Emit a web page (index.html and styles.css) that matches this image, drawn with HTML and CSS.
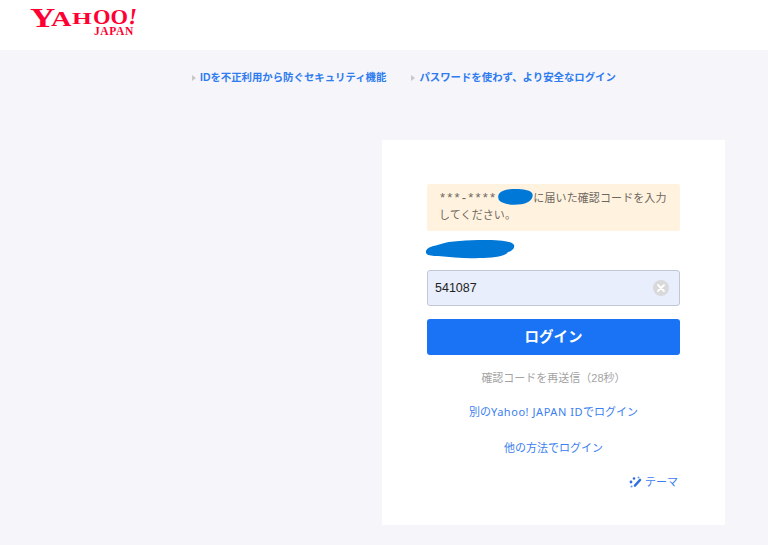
FILE: index.html
```html
<!DOCTYPE html>
<html lang="ja">
<head>
<meta charset="utf-8">
<title>Yahoo! JAPAN ログイン</title>
<link rel="stylesheet" href="styles.css">
</head>
<body>
<header class="header">
  <div class="logo">
    <div class="logo-main"><span class="logo-y">Y</span><span class="logo-a">A</span><span class="logo-h">H</span><span class="logo-o">OO</span><span class="logo-ex">!</span></div>
    <div class="logo-sub">JAPAN</div>
  </div>
</header>
<main class="main">
  <nav class="nav">
    <a class="nav-link" href="#"><span class="tri"></span>IDを不正利用から防ぐセキュリティ機能</a>
    <a class="nav-link" href="#"><span class="tri"></span>パスワードを使わず、より安全なログイン</a>
  </nav>
  <div class="card-row">
    <section class="card">
      <div class="notice">
        <p class="notice-text"><span class="stars">***-****</span><span class="mask"><svg class="mask-svg" viewBox="0 0 38 18" width="40" height="20"><path d="M3 9C3 4 9 2 16 1.500C24 1 33 2 35 5C37 8 35 12 31 14C25 17 14 17 9 15C5 14 3 12 3 9Z" fill="#0078d7"/></svg></span>に届いた確認コードを入力してください。</p>
      </div>
      <div class="user-row">
        <svg class="user-mask" viewBox="0 0 92 22" width="92" height="22"><path d="M2 13C3 9 10 8 17 6C25 3 44 2 60 2C75 2 88 3 90 7C91 10 88 13 84 14C82 18 70 20 55 20C42 21 28 19 14 18C6 18 1 17 2 13Z" fill="#0078d7"/></svg>
      </div>
      <div class="field">
        <span class="field-value">541087</span>
        <span class="clear"><svg viewBox="0 0 16 16" width="16" height="16"><circle cx="8" cy="8" r="8" fill="#d9d9dc"/><path d="M5 5L11 11M11 5L5 11" stroke="#fff" stroke-width="1.800" stroke-linecap="round"/></svg></span>
      </div>
      <button class="btn" type="button">ログイン</button>
      <div class="resend">確認コードを再送信（28秒）</div>
      <a class="link link-first" href="#">別の<span class="latin">Yahoo! JAPAN ID</span>でログイン</a>
      <a class="link link-second" href="#">他の方法でログイン</a>
      <div class="theme-row">
        <a class="theme" href="#"><svg viewBox="0 0 14 12" width="14" height="12"><path d="M6 9.500L11 4" stroke="#2f6fe0" stroke-width="2.600" stroke-linecap="round"/><circle cx="2" cy="6" r="1.400" fill="#2f6fe0"/><circle cx="5" cy="2.500" r="1.300" fill="#2f6fe0"/><circle cx="2.500" cy="10.500" r="1.100" fill="#6b9bef"/><circle cx="9.500" cy="1.500" r="1" fill="#6b9bef"/></svg>テーマ</a>
      </div>
    </section>
  </div>
</main>
</body>
</html>
```
FILE: styles.css
```css
* { box-sizing: border-box; }
html, body { margin: 0; padding: 0; }
body {
  width: 768px;
  height: 545px;
  overflow: hidden;
  background: #f6f6fa;
  font-family: "Liberation Sans", "Noto Sans CJK JP", sans-serif;
  color: #333;
}
a { text-decoration: none; }

.header {
  height: 50px;
  background: #fff;
  padding: 1px 0 0 30px;
}
.logo {
  width: 110px;
  color: #ff0033;
  font-family: "Liberation Serif", serif;
  font-weight: 700;
  line-height: 1;
}
.logo-main {
  display: flex;
  align-items: baseline;
  height: 24px;
  white-space: nowrap;
}
.logo-y { font-size: 28px; line-height: 28px; width: 21px; transform: translateY(3px) scaleX(1.25); transform-origin: left bottom; }
.logo-a { font-size: 21px; line-height: 21px; width: 21px; transform: translateY(2px) scaleX(1.35); transform-origin: left bottom; }
.logo-h { font-size: 17px; line-height: 17px; width: 21px; transform: scaleX(1.5); transform-origin: left bottom; }
.logo-o { font-size: 21px; line-height: 21px; width: 35px; transform: scaleX(1.07); transform-origin: left bottom; }
.logo-ex { font-size: 23px; line-height: 23px; margin-left: 1px; transform: skewX(-8deg); }
.logo-sub {
  font-size: 11.500px;
  line-height: 11px;
  margin: 1px 0 0 64px;
  letter-spacing: .6px;
}

.main { padding-top: 19px; }
.nav {
  display: flex;
  gap: 25px;
  padding-left: 192px;
  padding-top: 1px;
  height: 71px;
}
.nav-link {
  display: flex;
  align-items: center;
  height: 15px;
  gap: 4px;
  font-size: 10.400px;
  font-weight: 700;
  color: #2f7bf0;
  white-space: nowrap;
  line-height: 15px;
}
.tri {
  width: 0;
  height: 0;
  border-left: 4px solid #c8c8c8;
  border-top: 3px solid transparent;
  border-bottom: 3px solid transparent;
}

.card-row {
  display: flex;
  padding-left: 382px;
}
.card {
  width: 343px;
  height: 385px;
  background: #fff;
  padding: 44px 45px 0;
  display: flex;
  flex-direction: column;
}
.notice {
  background: #fff3e0;
  border-radius: 2px;
  height: 47px;
  padding: 6px 13px 0 12px;
}
.notice-text {
  margin: 0;
  font-size: 11px;
  line-height: 17px;
  color: #6f675e;
  letter-spacing: .1px;
}
.stars {
  font-size: 13px;
  letter-spacing: 2.200px;
  line-height: 14px;
  margin-left: 1px;
}
.mask {
  display: inline-block;
  width: 36px;
  height: 14px;
  position: relative;
  vertical-align: -2px;
}
.mask-svg { position: absolute; left: -2px; top: -3px; display: block; }
.user-row {
  height: 39px;
  padding-top: 7px;
  margin-left: -3px;
}
.user-mask { display: block; }
.field {
  height: 36px;
  background: #e8eefb;
  border: 1px solid #c2c7d2;
  border-radius: 3px;
  display: flex;
  align-items: center;
  justify-content: space-between;
  padding: 0 10px 0 7px;
}
.field-value { font-size: 12.500px; color: #222; }
.clear { display: flex; }
.btn {
  margin: 13px 0 0;
  height: 36px;
  width: 100%;
  border: 0;
  border-radius: 3px;
  background: #1a73f5;
  color: #fff;
  font-family: inherit;
  font-size: 14.500px;
  font-weight: 700;
  padding: 0 0 3px;
}
.resend {
  margin-top: 15px;
  height: 16px;
  line-height: 16px;
  text-align: center;
  font-size: 11px;
  color: #a3a3a3;
}
.link {
  display: block;
  text-align: center;
  font-family: "Noto Sans", "Noto Sans CJK JP", sans-serif;
  font-size: 11px;
  line-height: 16px;
  height: 16px;
  color: #3b80f0;
}
.latin { letter-spacing: .55px; }
.link-first { margin-top: 18px; }
.link-second { margin-top: 20px; }
.theme-row {
  margin-top: 18px;
  display: flex;
  justify-content: flex-end;
  padding-right: 2px;
}
.theme {
  display: flex;
  align-items: center;
  gap: 2px;
  font-size: 11px;
  line-height: 16px;
  color: #3b80f0;
}
```
